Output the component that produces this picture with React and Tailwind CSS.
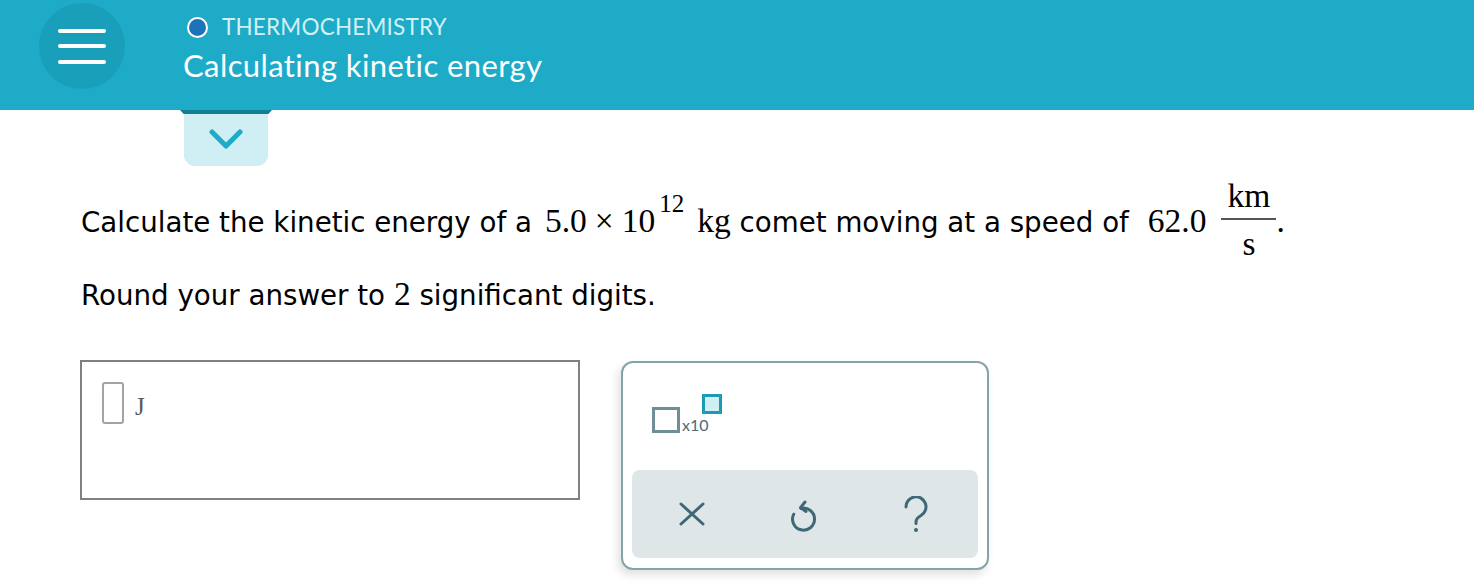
const sans = { fontFamily: '"DejaVu Sans", Verdana, sans-serif' };

function Header() {
  return (
    <header className="h-[110px] bg-[#1dabc8] flex items-start pl-[39px] pt-[3px]">
      <button className="w-[86px] h-[86px] rounded-full bg-[#1a9fbb] flex flex-col items-center justify-center gap-[11.5px]">
        <span className="block w-[48px] h-[4px] rounded-full bg-white" />
        <span className="block w-[48px] h-[4px] rounded-full bg-white" />
        <span className="block w-[48px] h-[4px] rounded-full bg-white" />
      </button>
      <div className="ml-[62px] pt-[13px] font-['Lato',sans-serif]">
        <div className="flex items-center">
          <span className="w-[21px] h-[21px] rounded-full bg-[#1b74b9] border-[2px] border-white" />
          <span className="ml-[14px] text-[22.5px] leading-none text-[#d3f0f6] tracking-[0.2px]">THERMOCHEMISTRY</span>
        </div>
        <div className="mt-[11px] ml-[-4px] text-[31px] leading-none text-white tracking-[0.4px]">Calculating kinetic energy</div>
      </div>
    </header>
  );
}

function Tab() {
  return (
    <div className="ml-[180px] w-[92px] flex flex-col items-center">
      <div className="w-[92px] h-[4px] bg-[#137f93] [clip-path:polygon(0_0,100%_0,96%_100%,4%_100%)]" />
      <div className="w-[84px] h-[52px] bg-[#cfeff4] rounded-b-[11px] flex items-center justify-center pb-[2px]">
        <svg width="34" height="22" viewBox="0 0 34 22" fill="none">
          <polyline points="3,4 17,18 31,4" stroke="#1dabc8" strokeWidth="5" strokeLinecap="round" strokeLinejoin="round" />
        </svg>
      </div>
    </div>
  );
}

function Question() {
  const math = 'font-["Liberation_Serif",serif] text-[33.5px]';
  return (
    <div className="pl-[81px] text-[27.7px] text-black" style={sans}>
      <p className="leading-[1.2] mt-[13px]">
        Calculate the kinetic energy of a
        <span className={math + ' ml-[13px]'}>5.0</span>
        <span className={math + ' mx-[8px]'}>×</span>
        <span className={math}>10</span>
        <span className='font-["Liberation_Serif",serif] text-[25px] ml-[4px] align-[20px]'>12</span>
        <span className={math + ' ml-[13px]'}>kg</span>
        {' '}comet moving at a speed of
        <span className={math + ' ml-[19px]'}>62.0</span>
        <span className="inline-flex flex-col items-center ml-[15px] align-[25px]">
          <span className={math + ' leading-none px-[3px]'}>km</span>
          <span className="block w-[55px] h-[2px] bg-[#555] mt-[5px]" />
          <span className={math + ' leading-none mt-[7px]'}>s</span>
        </span>
        <span className={math}>.</span>
      </p>
      <p className="leading-[1.2] mt-[14px]">
        Round your answer to <span className={math}>2</span> significant digits.
      </p>
    </div>
  );
}

function AnswerBox() {
  return (
    <div className="w-[500px] h-[140px] border-[2px] border-[#808080] pl-[20px] pt-[20px] flex items-start">
      <span className="w-[22px] h-[42px] border-[2px] border-[#a3a3a3] rounded-[3px]" />
      <span className='ml-[11px] mt-[12px] font-["Liberation_Serif",serif] text-[25px] leading-none text-[#5a5a5a]'>J</span>
    </div>
  );
}

function Keypad() {
  const ink = '#3e6876';
  return (
    <div className="w-[368px] h-[209px] border-[2px] border-[#86a2aa] rounded-[12px] bg-white shadow-[-3px_5px_10px_rgba(0,0,0,0.12)] flex flex-col px-[9px] pb-[10px]">
      <div className="flex-1 pl-[20px] pt-[31px]">
        <button className="flex items-start">
          <span className="mt-[13px] w-[28px] h-[26px] border-[3px] border-[#6f8f98]" />
          <span className="mt-[23px] ml-[2px] text-[16px] leading-none text-[#4a6b76] font-['Lato',sans-serif]">x10</span>
          <span className="ml-[-7px] w-[20px] h-[20px] border-[3px] border-[#1b9cb6] bg-[#cfeff4]" />
        </button>
      </div>
      <div className="h-[88px] rounded-[8px] bg-[#dfe6e8] grid grid-cols-3 items-center">
        <div className="flex justify-center pl-[4px]">
          <svg width="28" height="26" viewBox="0 0 28 26" fill="none">
            <path d="M3 3 L25 23 M25 3 L3 23" stroke={ink} strokeWidth="3" strokeLinecap="round" />
          </svg>
        </div>
        <div className="flex justify-center pt-[2px]">
          <svg width="30" height="36" viewBox="0 0 30 36" fill="none">
            <path d="M11 11.4 A11 11 0 1 1 3.7 17.2" stroke={ink} strokeWidth="3" strokeLinecap="round" />
            <path d="M15 5 L10.5 10.6 L16 14.5" stroke={ink} strokeWidth="3" strokeLinecap="round" strokeLinejoin="round" />
          </svg>
        </div>
        <div className="flex justify-center pr-[8px] pt-[2px]">
          <svg width="26" height="38" viewBox="0 0 26 38" fill="none">
            <path d="M3 11 A10 10 0 1 1 18 19.5 C14.5 21.5 13 23 13 26 V27.5" stroke={ink} strokeWidth="3" strokeLinecap="round" />
            <circle cx="13" cy="34" r="2" fill={ink} />
          </svg>
        </div>
      </div>
    </div>
  );
}

export default function App() {
  return (
    <div className="w-[1474px] h-[585px] bg-white overflow-hidden">
      <Header />
      <Tab />
      <Question />
      <div className="flex items-start pl-[80px] mt-[46px] gap-[41px]">
        <AnswerBox />
        <div className="mt-[1px]">
          <Keypad />
        </div>
      </div>
    </div>
  );
}
